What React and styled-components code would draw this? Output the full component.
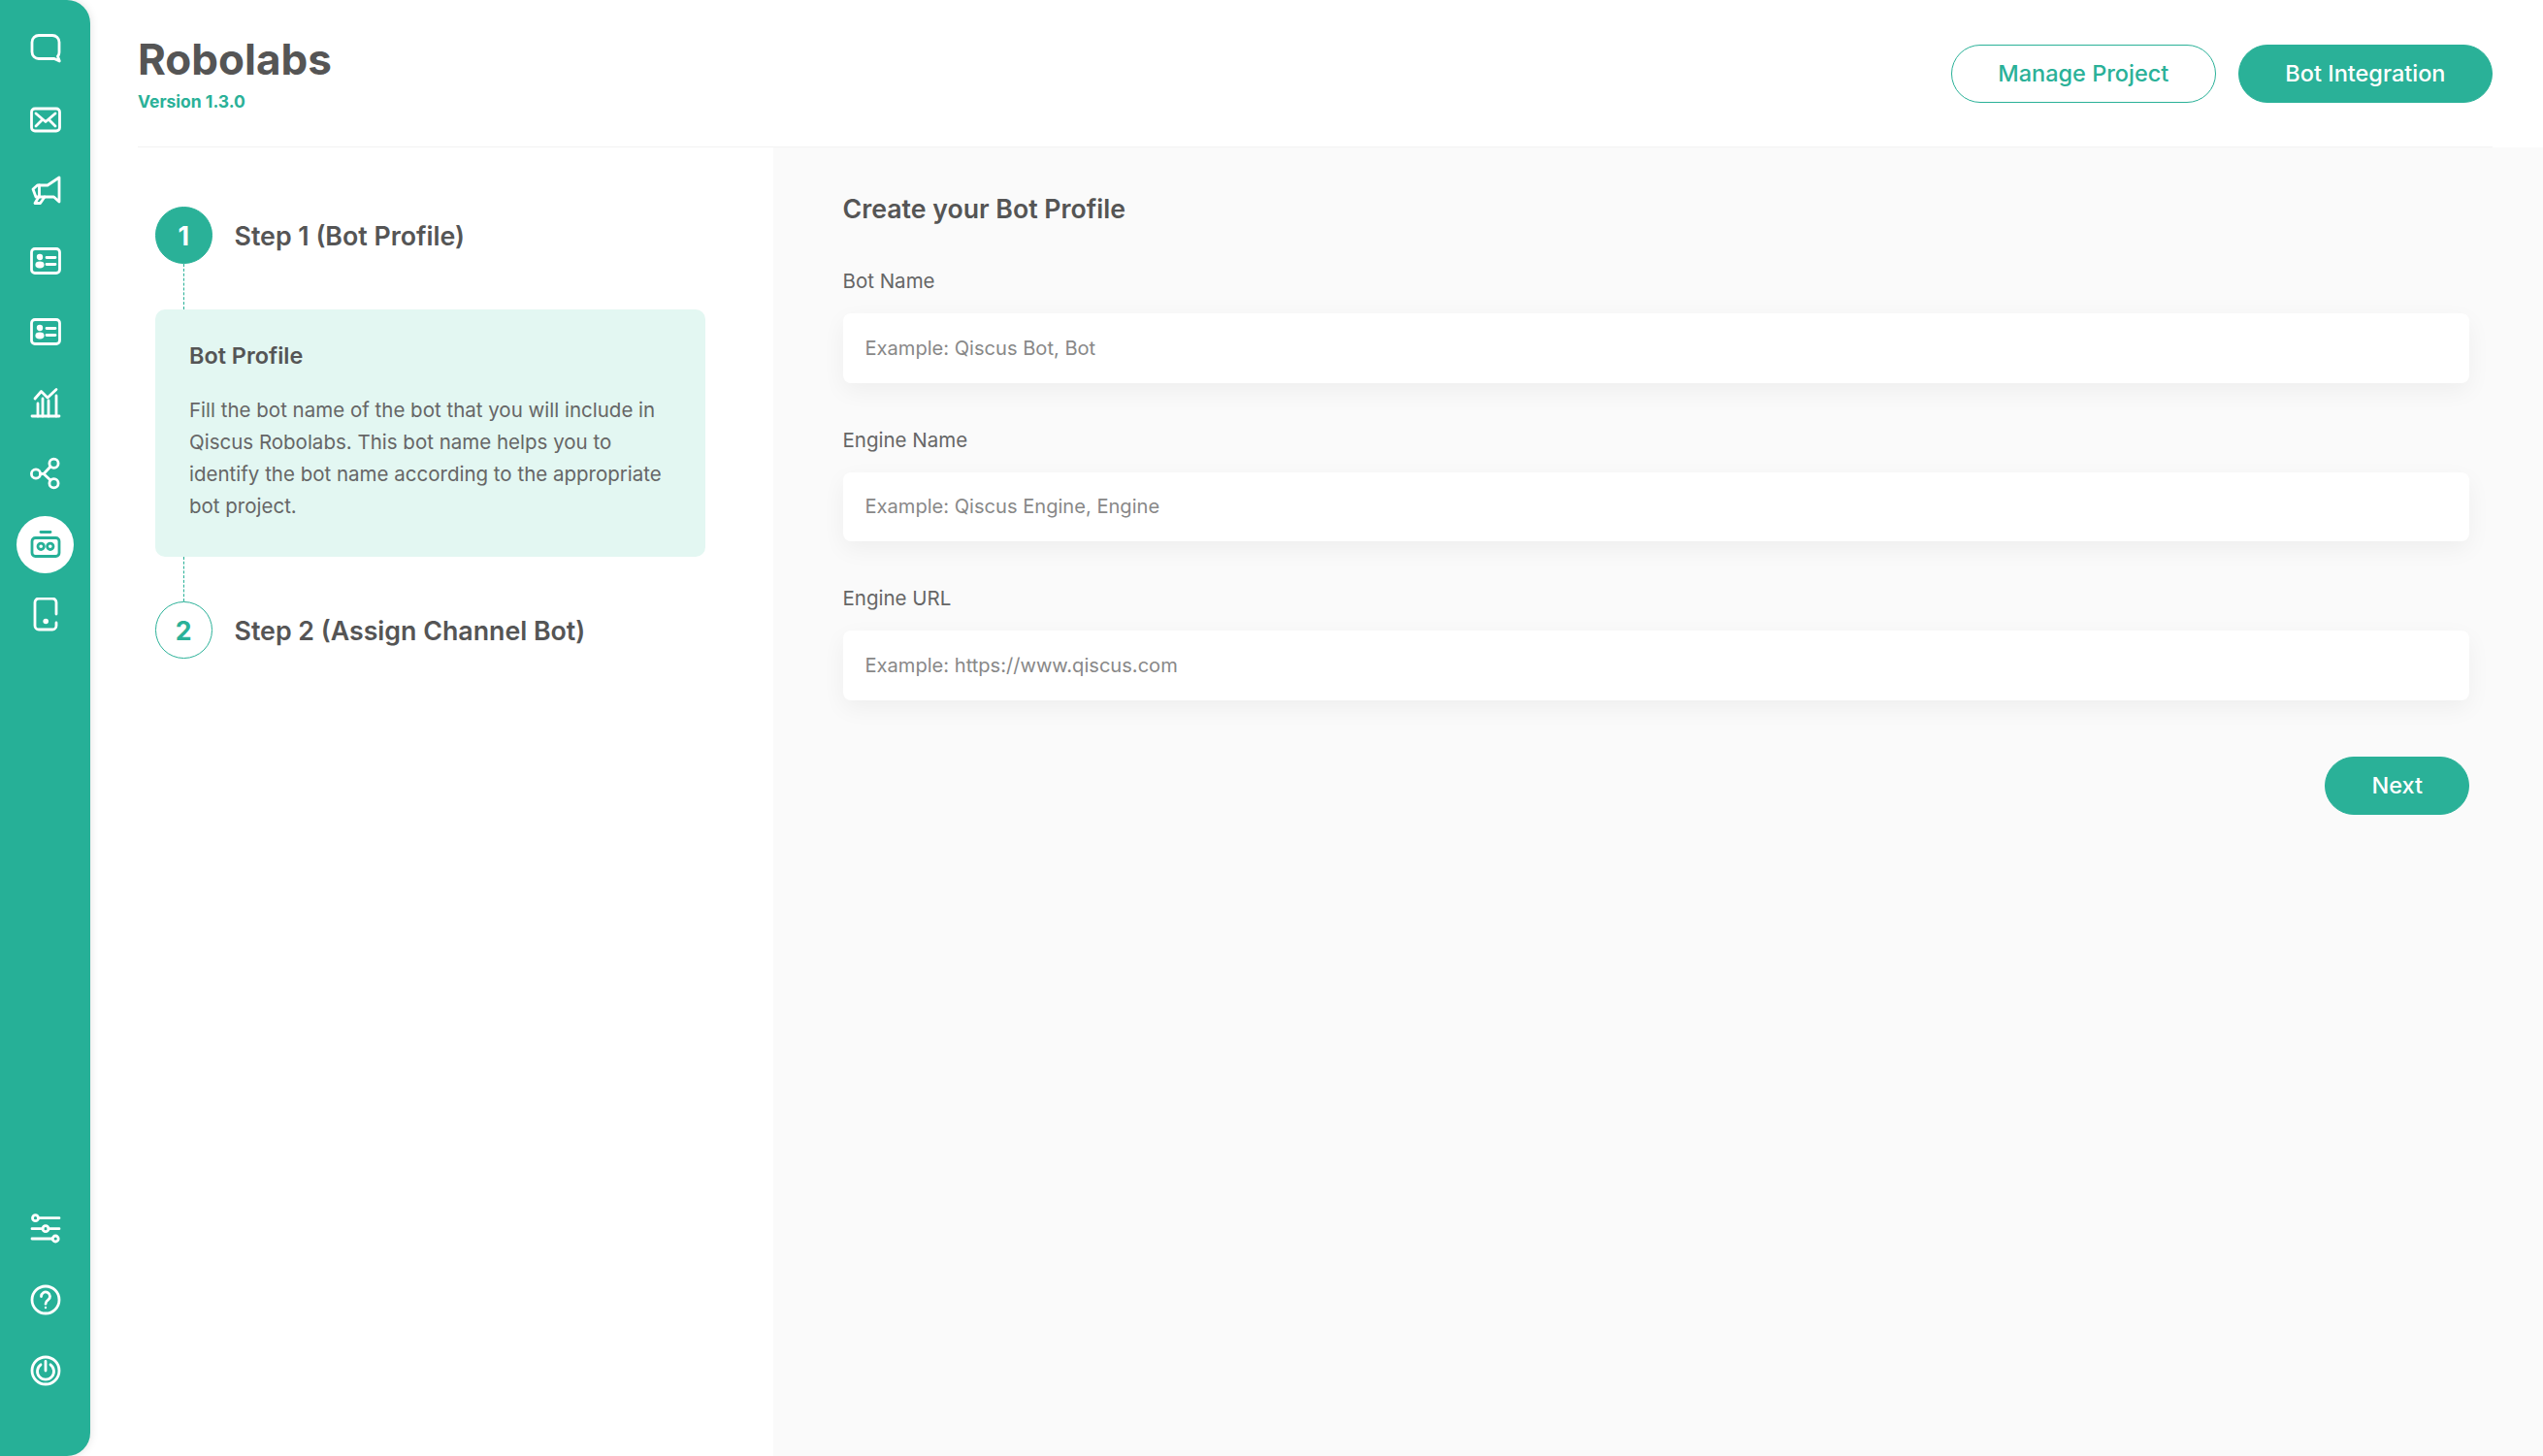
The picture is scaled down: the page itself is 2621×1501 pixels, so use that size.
import React from "react";
import styled, { createGlobalStyle } from "styled-components";

const TEAL = "#2ab198";
const SIDE = "#26b097";
const DARK = "#555555";

const Global = createGlobalStyle`
  html, body { margin: 0; padding: 0; height: 100%; background: #fff; }
  #root { height: 100%; }
  * { box-sizing: border-box; }
  body { font-family: Inter, "Noto Sans", "Liberation Sans", sans-serif; color: ${DARK}; }
`;

const Page = styled.div`
  display: flex;
  height: 100vh;
  overflow: hidden;
  background: #fff;
`;

const Sidebar = styled.aside`
  width: 93px;
  flex: none;
  background: ${SIDE};
  border-radius: 0 24px 24px 0;
  box-shadow: 0 0 10px rgba(0, 0, 0, 0.12);
  display: flex;
  flex-direction: column;
  justify-content: space-between;
  padding: 13.5px 0 51.5px;
  position: relative;
  z-index: 1;
`;

const NavGroup = styled.nav`
  display: flex;
  flex-direction: column;
`;

const NavSlot = styled.div`
  height: 73px;
  display: flex;
  align-items: center;
  justify-content: center;
`;

const NavBubble = styled.div`
  width: 59px;
  height: 59px;
  border-radius: 50%;
  display: flex;
  align-items: center;
  justify-content: center;
  background: ${(p) => (p.$active ? "#fff" : "transparent")};
  color: ${(p) => (p.$active ? SIDE : "#fff")};
`;

const Glyph = styled.svg`
  width: 36px;
  height: 36px;
  fill: none;
  stroke: currentColor;
  stroke-width: 2.8;
  stroke-linecap: round;
  stroke-linejoin: round;
`;

const Main = styled.div`
  flex: 1;
  min-width: 0;
  display: flex;
  flex-direction: column;
`;

const Header = styled.header`
  height: 152px;
  flex: none;
  margin: 0 52px 0 49px;
  border-bottom: 1px solid #f2f2f2;
  display: flex;
  justify-content: space-between;
  align-items: flex-start;
`;

const TitleBlock = styled.div`
  padding-top: 34px;
`;

const Title = styled.h1`
  margin: 0;
  font-size: 44px;
  line-height: 54px;
  font-weight: 700;
  color: ${DARK};
`;

const Version = styled.div`
  margin-top: 5px;
  font-size: 17.5px;
  line-height: 24px;
  font-weight: 700;
  color: ${TEAL};
`;

const HeaderActions = styled.div`
  display: flex;
  gap: 23px;
  padding-top: 45.5px;
`;

const PillButton = styled.button`
  height: 60px;
  padding: 0 ${(p) => p.$pad}px;
  border-radius: 30px;
  font-family: inherit;
  font-size: 23.5px;
  font-weight: 500;
  border: 1.5px solid ${TEAL};
  background: ${(p) => (p.$outline ? "#fff" : TEAL)};
  color: ${(p) => (p.$outline ? TEAL : "#fff")};
  white-space: nowrap;
`;

const Body = styled.div`
  flex: 1;
  min-height: 0;
  display: flex;
`;

const StepsPanel = styled.section`
  width: 704px;
  flex: none;
  padding: 61px 70px 0 67px;
  background: #fff;
`;

const StepRow = styled.div`
  display: flex;
  align-items: center;
  gap: 23px;
  height: 59px;
`;

const StepCircle = styled.div`
  width: 58.5px;
  height: 58.5px;
  border-radius: 50%;
  flex: none;
  display: flex;
  align-items: center;
  justify-content: center;
  font-size: 26.7px;
  font-weight: 700;
  border: 1.5px solid ${TEAL};
  background: ${(p) => (p.$filled ? TEAL : "#fff")};
  color: ${(p) => (p.$filled ? "#fff" : TEAL)};
`;

const StepLabel = styled.div`
  font-size: 26.75px;
  font-weight: 600;
  color: ${DARK};
`;

const Connector = styled.div`
  height: ${(p) => p.$h}px;
  width: 0;
  margin-left: 29px;
  border-left: 1px dashed ${TEAL};
`;

const InfoCard = styled.div`
  background: #e3f7f2;
  border-radius: 10px;
  padding: 33.5px 30px 0 35px;
  height: 255.5px;
`;

const InfoTitle = styled.h3`
  margin: 0 0 24px;
  font-size: 23.4px;
  line-height: 30px;
  font-weight: 600;
  color: ${DARK};
`;

const InfoText = styled.p`
  margin: 0;
  font-size: 20.5px;
  line-height: 33px;
  color: #666;
`;

const FormPanel = styled.section`
  flex: 1;
  min-width: 0;
  background: #fafafa;
  padding: 46px 76px 0 71.5px;
`;

const FormTitle = styled.h2`
  margin: 0 0 45px;
  font-size: 26.7px;
  line-height: 34px;
  font-weight: 600;
  color: ${DARK};
`;

const Field = styled.div`
  margin-bottom: 46px;
`;

const FieldLabel = styled.label`
  display: block;
  font-size: 20.5px;
  line-height: 26px;
  color: #666;
  margin-bottom: 20px;
`;

const TextInput = styled.input`
  display: block;
  width: 100%;
  height: 71.5px;
  border: 0;
  outline: 0;
  border-radius: 8px;
  background: #fff;
  padding: 0 23px;
  font-family: inherit;
  font-size: 20.1px;
  color: #555;
  box-shadow: 0 8px 24px rgba(0, 0, 0, 0.05);
  &::placeholder { color: #888; opacity: 1; }
`;

const FormActions = styled.div`
  display: flex;
  justify-content: flex-end;
  margin-top: 58px;
`;

const icons = {
  chat: <path d="M9 2.5h14a7 7 0 0 1 7 7V20c0 1.6-.6 3-1.5 4l1.8 5-5.3-2.5H9a7 7 0 0 1-7-7v-10a7 7 0 0 1 7-7z" />,
  mail: (
    <>
      <rect x="1.5" y="5" width="29" height="23" rx="3.5" />
      <path d="M6 10l10 8.5L26 10M6 23l6-6M26 23l-6-6" />
    </>
  ),
  megaphone: (
    <>
      <path d="M30 3v25L24.5 23H6L3 15l4.5-4H18L30 3z" />
      <path d="M9.5 11v11L5 29.5h5.5L15 23" />
    </>
  ),
  card: (
    <>
      <rect x="1.5" y="3.5" width="29" height="25" rx="3.5" />
      <circle cx="10" cy="12" r="1.8" fill="currentColor" />
      <ellipse cx="10" cy="20" rx="3.2" ry="2" fill="currentColor" />
      <path d="M17 12.5h9M17 19.5h9" />
    </>
  ),
  chart: (
    <>
      <path d="M2 30h28" />
      <path d="M5 12l6.5-7.5 6.5 6.5 9-8.5" />
      <path d="M8 30V17M13 30V12M19 30V14M27 30V9" />
    </>
  ),
  share: (
    <>
      <circle cx="6" cy="16.5" r="4.6" />
      <circle cx="24.5" cy="5.8" r="4.6" />
      <circle cx="24.5" cy="26.3" r="4.6" />
      <path d="M10.6 16.5H14L21 9M14 16.5l7 6.5" />
    </>
  ),
  robot: (
    <>
      <path d="M11 3.5h10" />
      <rect x="2" y="9.5" width="28" height="19" rx="3.5" />
      <circle cx="11.2" cy="18.3" r="3.2" />
      <circle cx="20.8" cy="18.3" r="3.2" />
    </>
  ),
  phone: (
    <>
      <path d="M27 15V3a4 4 0 0 0-4-4H9a4 4 0 0 0-4 4v24a4 4 0 0 0 4 4h14a4 4 0 0 0 4-4v-3" />
      <circle cx="16.2" cy="22.5" r="2.8" fill="currentColor" stroke="none" />
    </>
  ),
  sliders: (
    <>
      <path d="M8.5 4.7H30M2 15.7h11M19 15.7h11M2 26h21" />
      <circle cx="5.5" cy="4.7" r="3" />
      <circle cx="16" cy="15.7" r="3" />
      <circle cx="26.2" cy="26" r="3" />
    </>
  ),
  help: (
    <>
      <circle cx="16" cy="16" r="14" />
      <path d="M11.5 12.5a4.5 4.5 0 1 1 7 3.7c-1.6 1.1-2.5 2-2.5 4" />
      <circle cx="16" cy="24" r="1.2" fill="currentColor" stroke="none" />
    </>
  ),
  power: (
    <>
      <circle cx="16" cy="16" r="14" />
      <path d="M11 9.8a8.5 8.5 0 1 0 10 0" />
      <path d="M16 6.5V16" />
    </>
  ),
};

const Icon = ({ name }) => <Glyph viewBox="-2 -2 36 36">{icons[name]}</Glyph>;

const NavItem = ({ name, active }) => (
  <NavSlot>
    <NavBubble $active={active}>
      <Icon name={name} />
    </NavBubble>
  </NavSlot>
);

const fields = [
  ["Bot Name", "Example: Qiscus Bot, Bot"],
  ["Engine Name", "Example: Qiscus Engine, Engine"],
  ["Engine URL", "Example: https://www.qiscus.com"],
];

export default function App() {
  return (
    <>
      <Global />
      <Page>
        <Sidebar>
          <NavGroup>
            <NavItem name="chat" />
            <NavItem name="mail" />
            <NavItem name="megaphone" />
            <NavItem name="card" />
            <NavItem name="card" />
            <NavItem name="chart" />
            <NavItem name="share" />
            <NavItem name="robot" active />
            <NavItem name="phone" />
          </NavGroup>
          <NavGroup>
            <NavItem name="sliders" />
            <NavItem name="help" />
            <NavItem name="power" />
          </NavGroup>
        </Sidebar>
        <Main>
          <Header>
            <TitleBlock>
              <Title>Robolabs</Title>
              <Version>Version 1.3.0</Version>
            </TitleBlock>
            <HeaderActions>
              <PillButton $outline $pad={47.5}>Manage Project</PillButton>
              <PillButton $pad={47.5}>Bot Integration</PillButton>
            </HeaderActions>
          </Header>
          <Body>
            <StepsPanel>
              <StepRow>
                <StepCircle $filled>1</StepCircle>
                <StepLabel>Step 1 (Bot Profile)</StepLabel>
              </StepRow>
              <Connector $h={46.5} />
              <InfoCard>
                <InfoTitle>Bot Profile</InfoTitle>
                <InfoText>
                  Fill the bot name of the bot that you will include in Qiscus Robolabs. This bot
                  name helps you to identify the bot name according to the appropriate bot project.
                </InfoText>
              </InfoCard>
              <Connector $h={46} />
              <StepRow>
                <StepCircle>2</StepCircle>
                <StepLabel>Step 2 (Assign Channel Bot)</StepLabel>
              </StepRow>
            </StepsPanel>
            <FormPanel>
              <FormTitle>Create your Bot Profile</FormTitle>
              {fields.map(([label, placeholder]) => (
                <Field key={label}>
                  <FieldLabel>{label}</FieldLabel>
                  <TextInput placeholder={placeholder} />
                </Field>
              ))}
              <FormActions>
                <PillButton $pad={47}>Next</PillButton>
              </FormActions>
            </FormPanel>
          </Body>
        </Main>
      </Page>
    </>
  );
}
